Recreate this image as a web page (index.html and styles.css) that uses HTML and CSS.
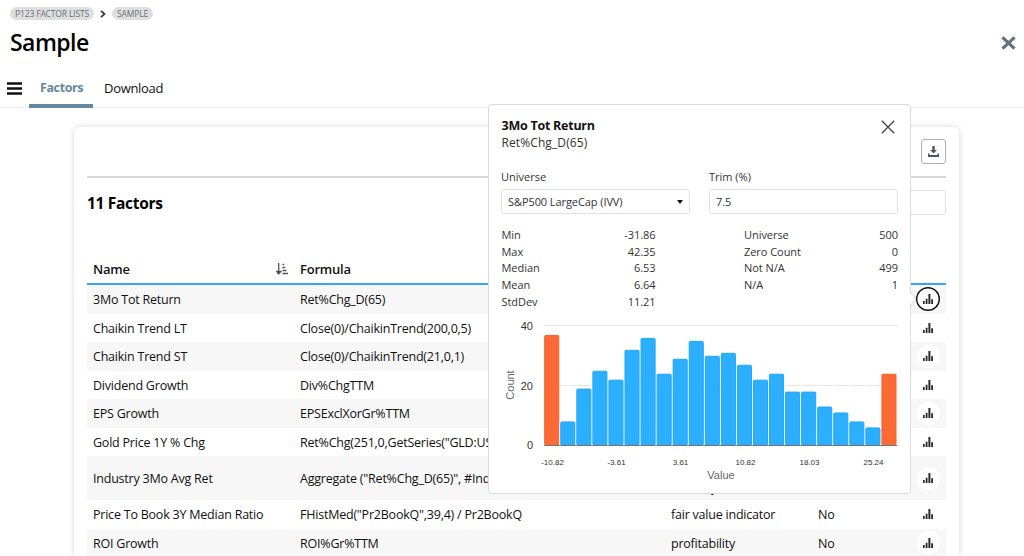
FILE: index.html
```
<!DOCTYPE html>
<html lang="en">

<head>
    <meta charset="utf-8">
    <meta name="viewport" content="width=device-width, initial-scale=1">
    <title>Sample</title>
    <link rel="stylesheet" href="styles.css">
</head>

<body>
    <!-- Shared icons -->
    <svg class="sprite">
        <symbol id="bars" viewBox="0 0 10 10">
            <path d="M0 7h1.700v3H0zM2.700 4.800h1.800V10H2.700zM5.400 0h2v10h-2zM8.200 5.200H10V10H8.200z" fill="#2b2b2b"/>
        </symbol>
    </svg>

    <header class="page-header">
        <nav class="breadcrumb">
            <span class="crumb">P123 FACTOR LISTS</span>
            <svg width="6" height="8" viewBox="0 0 6 8"><path d="M1 .8 4.500 4 1 7.200" fill="none" stroke="#333e48" stroke-width="1.800"/></svg>
            <span class="crumb">SAMPLE</span>
        </nav>
        <div class="title-row">
            <h1>Sample</h1>
            <svg width="15" height="14" viewBox="0 0 15 14"><path d="M1.500 1.300l12 11.400M13.500 1.300l-12 11.400" stroke="#66717c" stroke-width="3.200"/></svg>
        </div>
        <div class="tabs">
            <svg class="menu" width="15" height="13" viewBox="0 0 15 13"><path d="M0 1.500h15M0 6.500h15M0 11.500h15" stroke="#111" stroke-width="2.400"/></svg>
            <a class="tab active">Factors</a>
            <a class="tab">Download</a>
        </div>
    </header>

    <main class="card">
        <div class="toolbar">
            <button class="download">
                <svg width="11" height="11" viewBox="0 0 11 11"><path d="M4.300 0h2.400v4h2.200L5.500 7.600 2.100 4h2.200zM0 7.500h1.500v1.500h8V7.500H11V11H0z" fill="#4a5764"/></svg>
            </button>
        </div>
        <div class="list-head">
            <h2>11 Factors</h2>
            <input class="search" type="text">
        </div>
        <div class="table">
            <div class="row head">
                <span class="name-head">Name
                    <svg width="12" height="12" viewBox="0 0 12 12"><path d="M2.700 0v9M.5 8.300h4.400L2.700 11z" fill="#555" stroke="#555" stroke-width="1.300"/><path d="M6.500 1.500h1.800M6.500 4.500h2.800M6.500 7.500h3.900M6.500 10.500H12" stroke="#555" stroke-width="1.500"/></svg>
                </span>
                <span>Formula</span>
            </div>
            <div class="row"><span>3Mo Tot Return</span><span>Ret%Chg_D(65)</span><span></span><span></span><i class="chart-btn selected"><svg><use href="#bars"/></svg></i></div>
            <div class="row"><span>Chaikin Trend LT</span><span>Close(0)/ChaikinTrend(200,0,5)</span><span></span><span></span><i class="chart-btn"><svg><use href="#bars"/></svg></i></div>
            <div class="row"><span>Chaikin Trend ST</span><span>Close(0)/ChaikinTrend(21,0,1)</span><span></span><span></span><i class="chart-btn"><svg><use href="#bars"/></svg></i></div>
            <div class="row"><span>Dividend Growth</span><span>Div%ChgTTM</span><span></span><span></span><i class="chart-btn"><svg><use href="#bars"/></svg></i></div>
            <div class="row"><span>EPS Growth</span><span>EPSExclXorGr%TTM</span><span></span><span></span><i class="chart-btn"><svg><use href="#bars"/></svg></i></div>
            <div class="row"><span>Gold Price 1Y % Chg</span><span>Ret%Chg(251,0,GetSeries("GLD:US</span><span></span><span></span><i class="chart-btn"><svg><use href="#bars"/></svg></i></div>
            <div class="row tall"><span>Industry 3Mo Avg Ret</span><span>Aggregate ("Ret%Chg_D(65)", #Ind</span><span><br>industry</span><span></span><i class="chart-btn"><svg><use href="#bars"/></svg></i></div>
            <div class="row"><span>Price To Book 3Y Median Ratio</span><span>FHistMed("Pr2BookQ",39,4) / Pr2BookQ</span><span>fair value indicator</span><span>No</span><i class="chart-btn"><svg><use href="#bars"/></svg></i></div>
            <div class="row"><span>ROI Growth</span><span>ROI%Gr%TTM</span><span>profitability</span><span>No</span><i class="chart-btn"><svg><use href="#bars"/></svg></i></div>
        </div>
    </main>

    <!-- Factor details popover -->
    <section class="popover">
        <div class="pop-head">
            <div>
                <h3>3Mo Tot Return</h3>
                <p>Ret%Chg_D(65)</p>
            </div>
            <svg width="14" height="14" viewBox="0 0 14 14"><path d="M.8.8l12.400 12.400M13.200.8.8 13.200" stroke="#444" stroke-width="1.300"/></svg>
        </div>
        <div class="fields">
            <div class="field">
                <label>Universe</label>
                <div class="control">S&amp;P500 LargeCap (IVV)<b class="caret"></b></div>
            </div>
            <div class="field">
                <label>Trim (%)</label>
                <div class="control">7.5</div>
            </div>
        </div>
        <div class="stats">
            <dl>
                <dt>Min</dt><dd>-31.86</dd>
                <dt>Max</dt><dd>42.35</dd>
                <dt>Median</dt><dd>6.53</dd>
                <dt>Mean</dt><dd>6.64</dd>
                <dt>StdDev</dt><dd>11.21</dd>
            </dl>
            <dl>
                <dt>Universe</dt><dd>500</dd>
                <dt>Zero Count</dt><dd>0</dd>
                <dt>Not N/A</dt><dd>499</dd>
                <dt>N/A</dt><dd>1</dd>
            </dl>
        </div>
        <svg class="chart" width="400" height="172" viewBox="0 0 400 172">
            <path class="grid" d="M43 15.500h353.500M43 75.500h353.500"/>
            <g id="histogram-bars"></g>
            <path class="axis" d="M43 135.500h353.500"/>
            <g class="y-labels">
                <text x="32" y="20">40</text>
                <text x="32" y="79.500">20</text>
                <text x="32" y="139">0</text>
            </g>
            <g class="x-labels">
                <text x="51.500" y="155">-10.82</text>
                <text x="115.500" y="155">-3.61</text>
                <text x="179.500" y="155">3.61</text>
                <text x="244.500" y="155">10.82</text>
                <text x="308.500" y="155">18.03</text>
                <text x="372.500" y="155">25.24</text>
            </g>
            <text class="axis-title" x="220" y="169">Value</text>
            <text class="axis-title" transform="translate(13 75) rotate(-90)">Count</text>
        </svg>
        <svg class="arrow" width="7" height="14" viewBox="0 0 7 14"><path d="M0 0l6 7-6 7" fill="#fff" stroke="#cfd2d5"/></svg>
    </section>

<script>
    const counts = [37, 8, 19, 25, 22, 32, 36, 24, 29, 35, 30, 31, 27, 22, 24, 18, 18, 13, 11, 8, 6, 24];
    const group = document.getElementById('histogram-bars');
    const step = 353.3 / counts.length;
    const baseline = 135;

    function addRect(x, y, width, height, cls) {
        const rect = document.createElementNS('http://www.w3.org/2000/svg', 'rect');
        rect.setAttribute('x', x);
        rect.setAttribute('y', y);
        rect.setAttribute('width', width);
        rect.setAttribute('height', height);
        rect.setAttribute('class', cls);
        group.appendChild(rect);
    }

    counts.forEach((count, i) => {
        const x = 43.2 + i * step;
        const height = count * 2.983;
        // The first and last bins hold the trimmed values
        const trimmed = i === 0 || i === counts.length - 1;

        addRect(x + step - 1, 70, 1, 10, 'gap');
        addRect(x + 0.5, baseline - height + 0.8, step - 2, height - 0.8, trimmed ? 'bar trimmed' : 'bar');
    });
</script>

</body>

</html>
```
FILE: styles.css
```
* {
    box-sizing: border-box;
}

body {
    margin: 0;
    height: 556px;
    overflow: hidden;
    background-color: white;
    font-family: "Open Sans", "Noto Sans", sans-serif;
    font-size: 12.5px;
    color: #111;
}

h1, h2, h3, p, dl, dd {
    margin: 0;
}

svg {
    display: block;
    flex: none;
}

.sprite {
    position: absolute;
    width: 0;
    height: 0;
}

.page-header {
    height: 108px;
    padding-top: 7px;
    border-bottom: 1px solid #ededed;
}

.breadcrumb {
    display: flex;
    align-items: center;
    gap: 6px;
    padding-left: 10px;
    height: 13px;
}

.crumb {
    height: 13px;
    padding: 0 5px;
    border-radius: 7px;
    background-color: #dedede;
    color: #68737d;
    font-size: 8.5px;
    line-height: 14px;
    letter-spacing: -0.15px;
}

.title-row {
    display: flex;
    justify-content: space-between;
    align-items: center;
    height: 45px;
    padding: 0 8px 0 10px;
}

h1 {
    color: #000;
    font-size: 23px;
    font-weight: 600;
    line-height: 43px;
    letter-spacing: -0.55px;
}

.tabs {
    display: flex;
    height: 43px;
    padding-left: 7px;
}

.menu {
    margin: 17px 7px 0 0;
}

.tab {
    height: 43px;
    padding: 0 11px;
    line-height: 46px;
    font-size: 13px;
    letter-spacing: -0.3px;
}

.tab.active {
    width: 64px;
    border-bottom: 4px solid #6488a0;
    color: #6488a0;
    font-size: 12.5px;
    font-weight: 700;
    letter-spacing: -0.4px;
}

.card {
    width: 885px;
    height: 429px;
    margin: 19px 0 0 74px;
    padding: 0 13px;
    border-radius: 6px 6px 0 0;
    box-shadow: 0 0 6px rgba(0, 0, 0, 0.16);
}

.toolbar {
    display: flex;
    justify-content: flex-end;
    align-items: center;
    height: 51px;
    border-bottom: 2px solid #d8d8d8;
}

.download {
    display: flex;
    align-items: center;
    justify-content: center;
    width: 25px;
    height: 25px;
    padding: 0;
    border: 1px solid #a9aeb3;
    border-radius: 3px;
    background-color: white;
}

.list-head {
    display: flex;
    justify-content: space-between;
    height: 76px;
    padding-top: 12px;
}

h2 {
    color: #000;
    font-size: 15.5px;
    font-weight: 700;
    line-height: 26px;
    letter-spacing: -0.3px;
}

.search {
    width: 200px;
    height: 25px;
    border: 1px solid #dfe2e5;
    border-radius: 3px;
}

.row {
    display: grid;
    grid-template-columns: 207px 371px 147px 98px 36px;
    align-items: center;
    height: 28.5px;
    font-size: 12.5px;
    line-height: 17px;
    letter-spacing: -0.22px;
    white-space: nowrap;
}

.row > span {
    padding: 1px 0 0 6px;
}

.row:nth-child(even) {
    background-color: #f7f7f7;
}

.row.head {
    height: 31px;
    border-bottom: 2px solid #38a3f5;
    font-size: 13px;
    font-weight: 600;
}

.row.tall {
    height: 44px;
}

.row > .name-head {
    display: flex;
    justify-content: space-between;
    align-items: center;
    padding-right: 6px;
}

.chart-btn {
    display: flex;
    align-items: center;
    justify-content: center;
    justify-self: center;
    width: 23px;
    height: 23px;
    border-radius: 50%;
    background-color: white;
}

.chart-btn svg {
    width: 10px;
    height: 10px;
}

.chart-btn.selected {
    width: 24px;
    height: 24px;
    box-shadow: inset 0 0 0 1.4px #111;
}

/* Popover */
.popover {
    position: absolute;
    top: 104px;
    left: 488px;
    width: 423px;
    height: 390px;
    padding: 12px 12px 0;
    border: 1px solid #d9dcdf;
    border-radius: 4px;
    background-color: white;
    color: #333;
    font-size: 11px;
}

.pop-head {
    display: flex;
    justify-content: space-between;
    padding: 0 3px 0 0.5px;
    height: 51px;
}

.pop-head svg {
    margin-top: 3px;
}

h3 {
    color: #111;
    font-size: 12.5px;
    line-height: 17px;
    letter-spacing: -0.25px;
}

.pop-head p {
    font-size: 12px;
    line-height: 17px;
    letter-spacing: 0.1px;
}

.fields {
    display: grid;
    grid-template-columns: 189px 189px;
    gap: 19px;
}

.field label {
    display: block;
    height: 21px;
    line-height: 18px;
}

.control {
    display: flex;
    justify-content: space-between;
    align-items: center;
    height: 25px;
    padding: 0 6px;
    border: 1px solid #dfe2e5;
    border-radius: 3px;
    letter-spacing: -0.08px;
}

.caret {
    border: 3px solid transparent;
    border-top: 4px solid #111;
    border-bottom: 0;
}

.stats {
    display: flex;
    justify-content: space-between;
    margin-top: 13px;
    padding-left: 0.5px;
}

.stats dl {
    display: grid;
    grid-template-columns: 1fr auto;
    align-content: start;
    width: 154px;
    line-height: 16.7px;
    letter-spacing: -0.05px;
}

.stats dd {
    text-align: right;
}

.chart {
    margin-top: -1px;
    font-family: "Liberation Sans", Arial, sans-serif;
}

.grid {
    stroke: #e6e6e6;
}

.axis {
    stroke: #777;
}

.bar {
    fill: #2caffe;
    stroke: #20a5f9;
    rx: 1px;
}

.bar.trimmed {
    fill: #fe6a35;
    stroke: #fa6029;
}

.gap {
    fill: white;
}

.y-labels text {
    fill: #333;
    font-size: 11px;
    text-anchor: end;
}

.x-labels text {
    fill: #333;
    font-size: 8px;
    text-anchor: middle;
}

.axis-title {
    fill: #666;
    font-size: 11px;
    text-anchor: middle;
}

/* Arrow pointing to the selected row */
.arrow {
    position: absolute;
    top: 187px;
    right: -7px;
}
```
